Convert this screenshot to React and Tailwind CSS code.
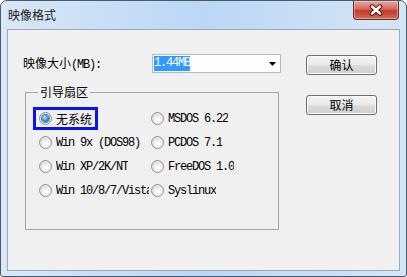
import React from 'react';

const CJK = "font-['Noto_Sans_CJK_SC',sans-serif]";
const MONO = "font-['Liberation_Mono','Noto_Sans_CJK_SC',monospace] tracking-[-1.2px]";

const options = [
  { label: '无系统', cjk: true, checked: true },
  { label: 'MSDOS 6.22' },
  { label: 'Win 9x (DOS98)' },
  { label: 'PCDOS 7.1' },
  { label: 'Win XP/2K/NT' },
  { label: 'FreeDOS 1.0' },
  { label: 'Win 10/8/7/Vista' },
  { label: 'Syslinux' },
];

function Radio({ checked }) {
  return (
    <span className="flex h-[13px] w-[13px] shrink-0 items-center justify-center rounded-full border border-[#8e8f8f] bg-[radial-gradient(circle_at_65%_70%,#ffffff_0%,#f2f2f2_35%,#d2d2d2_100%)]">
      {checked && (
        <span className="h-[7px] w-[7px] rounded-full bg-[radial-gradient(circle_at_40%_35%,#c4ecff_0%,#3a9ad9_45%,#0e4f86_100%)] shadow-[0_0_0_1px_#5a7d9a]" />
      )}
    </span>
  );
}

function Option({ label, cjk, checked }) {
  return (
    <div
      className={`flex h-[23px] w-fit items-center gap-[4px] border-[3px] pl-[3px] pr-[3px] ${
        checked ? 'border-[#0a14f0]' : 'border-transparent'
      }`}
    >
      <Radio checked={checked} />
      {cjk ? (
        <span className={`whitespace-nowrap text-[12px] leading-[16px] text-black ${CJK}`}>{label}</span>
      ) : (
        <span className={`max-w-[93px] overflow-hidden whitespace-nowrap text-[12px] leading-[16px] text-black ${MONO}`}>
          {label}
        </span>
      )}
    </div>
  );
}

function Button({ children }) {
  return (
    <button
      className={`flex h-[20px] w-[71px] items-center justify-center rounded-[3px] border border-[#707070] bg-[linear-gradient(to_bottom,#f2f2f2_0%,#ebebeb_50%,#dddddd_51%,#cfcfcf_100%)] text-[12px] leading-none text-black shadow-[inset_0_0_0_1px_#fbfbfb] ${CJK}`}
    >
      {children}
    </button>
  );
}

export default function App() {
  return (
    <div className="h-[277px] w-[407px] bg-white">
      <div className="flex h-[277px] w-[407px] flex-col rounded-t-[7px] rounded-b-[3px] border border-[#4a5a6e] bg-[linear-gradient(to_right,#dae7f5_0%,#c6ddf5_30%,#bbd7f6_50%,#c8def4_75%,#d6e5f4_100%)]">
        {/* Title bar */}
        <div className="flex h-[28px] shrink-0 items-start justify-between pl-[7px] pr-[7px]">
          <span className={`self-center text-[12px] leading-[14px] text-[#1a1a1a] ${CJK}`}>映像格式</span>
          <div className="flex h-[19px] w-[46px] items-center justify-center rounded-b-[4px] border border-t-0 border-[#6a2a22] bg-[linear-gradient(to_bottom,#e9a89e_0%,#d4685a_45%,#c23a26_55%,#cf6f5c_100%)] shadow-[inset_0_0_0_1px_rgba(255,220,210,0.45)]">
            <svg width="16" height="12" viewBox="0 0 16 12">
              <path d="M4 2.5 L12 9.5 M12 2.5 L4 9.5" stroke="#4b1a14" strokeWidth="4.4" strokeLinecap="round" />
              <path d="M4 2.5 L12 9.5 M12 2.5 L4 9.5" stroke="#ffffff" strokeWidth="2.4" strokeLinecap="round" />
            </svg>
          </div>
        </div>

        {/* Client area */}
        <div className="mx-[6px] flex h-[242px] shrink-0 border border-[#97a9bf] bg-[#f0f0f0] pl-[15px] pt-[24px]">
          <div className="flex w-[258px] flex-col">
            <div className="flex h-[19px] items-center">
              <span className="w-[129px] text-[12px] leading-[14px] text-black">
                <span className={CJK}>映像大小</span>
                <span className={MONO}>(MB):</span>
              </span>
              <div className="flex h-[19px] w-[129px] items-center justify-between border border-[#a9bcd3] bg-white pl-[1px] pr-[4px]">
                <span className={`bg-[#3399ff] text-[12px] leading-[15px] text-white ${MONO}`}>1.44MB</span>
                <svg width="7" height="4" viewBox="0 0 7 4">
                  <path d="M0 0 H7 L3.5 4 Z" fill="#000" />
                </svg>
              </div>
            </div>

            <fieldset className="ml-[2px] mt-[12px] h-[145px] w-[254px] border border-[#a6a6a6] pl-[7px] pt-[8px]">
              <legend className={`ml-[5px] px-[2px] text-[12px] leading-[14px] text-black ${CJK}`}>引导扇区</legend>
              <div className="grid grid-cols-[112px_1fr] gap-y-[1px]">
                {options.map((o) => (
                  <Option key={o.label} {...o} />
                ))}
              </div>
            </fieldset>
          </div>

          <div className="ml-[25px] flex flex-col gap-[20px] pt-[1px]">
            <Button>确认</Button>
            <Button>取消</Button>
          </div>
        </div>
      </div>
    </div>
  );
}
